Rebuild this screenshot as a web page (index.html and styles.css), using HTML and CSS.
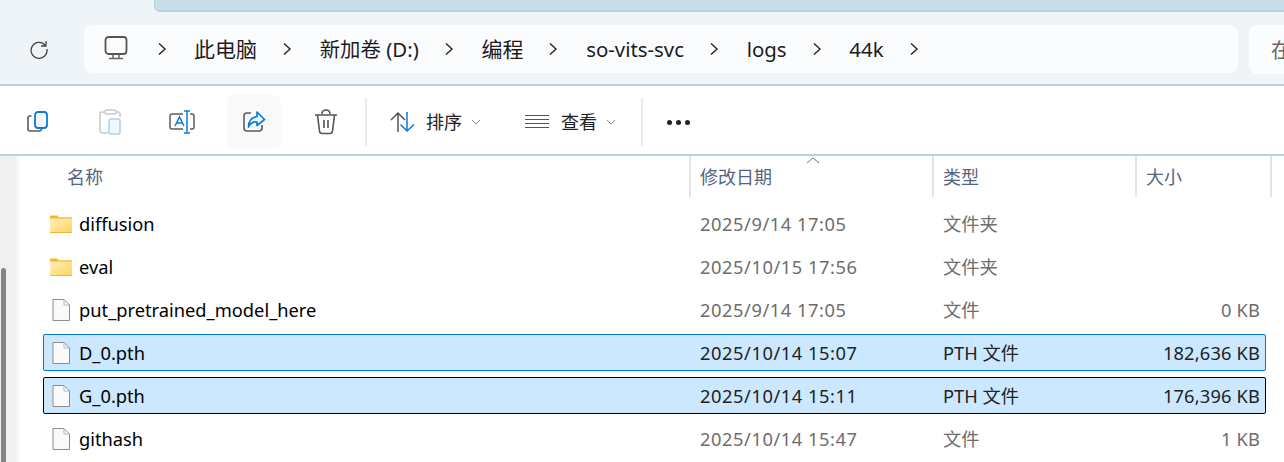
FILE: index.html
```html
<!DOCTYPE html>
<html lang="zh">
<head>
<meta charset="utf-8">
<title>44k</title>
<link rel="stylesheet" href="styles.css">
</head>
<body>
<svg width="0" height="0" class="defs">
  <defs>
    <symbol id="chev" viewBox="0 0 10 14"><path d="M2 1.500 8 7 2 12.500" fill="none" stroke="#2b2b2b" stroke-width="1.500"/></symbol>
    <symbol id="caret" viewBox="0 0 10 6"><path d="M1 1 5 5 9 1" fill="none" stroke="#8a8a8a" stroke-width="1"/></symbol>
    <symbol id="folder" viewBox="0 0 22 18">
      <path d="M0 1.500Q0 .5 1 .5H7L9 2.500H22V5H0Z" fill="#f9b81f"/>
      <rect x="0" y="2.500" width="22" height="15.500" fill="#f3b23a"/>
      <rect x="0" y="3.500" width="22" height="13.500" fill="url(#fg)"/>
      <linearGradient id="fg" x1="0" y1="0" x2="1" y2="1"><stop offset="0" stop-color="#fff0bd"/><stop offset="1" stop-color="#fdd55f"/></linearGradient>
    </symbol>
    <symbol id="file" viewBox="0 0 18 22">
      <path d="M1 .5H12L17.500 6V21.500H1Z" fill="#fafafa" stroke="#8d8d8d" stroke-width="1"/>
      <path d="M12 .5V6H17.500" fill="none" stroke="#b5b5b5" stroke-width="1"/>
    </symbol>
  </defs>
</svg>
<div class="window">
  <div class="nav">
    <div class="tab"></div>
    <div class="navrow">
      <div class="refresh">
        <svg width="20" height="20" viewBox="0 0 20 20"><path d="M16.500 6.500A8 8 0 1 0 18 10" fill="none" stroke="#444" stroke-width="1.300"/><path d="M17 2V7H12" fill="none" stroke="#444" stroke-width="1.300"/></svg>
      </div>
      <div class="crumbs">
        <svg class="pc" width="24" height="24" viewBox="0 0 24 24"><rect x="1.500" y="1" width="21" height="17" rx="3" fill="none" stroke="#555" stroke-width="1.800"/><path d="M9 18.500V22M15 18.500V22M5 22.500H19" fill="none" stroke="#666" stroke-width="1.500"/></svg>
        <svg class="sep first" width="10" height="14"><use href="#chev"/></svg>
        <span class="cjk">此电脑</span><svg class="sep" width="10" height="14"><use href="#chev"/></svg>
        <span>新加卷 (D:)</span><svg class="sep" width="10" height="14"><use href="#chev"/></svg>
        <span class="cjk">编程</span><svg class="sep" width="10" height="14"><use href="#chev"/></svg>
        <span>so-vits-svc</span><svg class="sep" width="10" height="14"><use href="#chev"/></svg>
        <span>logs</span><svg class="sep" width="10" height="14"><use href="#chev"/></svg>
        <span>44k</span><svg class="sep" width="10" height="14"><use href="#chev"/></svg>
      </div>
      <div class="search">在</div>
    </div>
  </div>
  <div class="toolbar">
    <button class="tool">
      <svg width="24" height="24" viewBox="0 0 24 24"><path d="M5.500 6H4Q2 6 2 8V19Q2 21 4 21H13Q15.500 21 15.500 19V18" fill="none" stroke="#5c5c5c" stroke-width="1.600"/><rect x="9" y="2" width="12" height="16" rx="3" fill="#f4f8fc" stroke="#0a7cd6" stroke-width="1.800"/></svg>
    </button>
    <button class="tool">
      <svg width="24" height="26" viewBox="0 0 24 26"><path d="M7 3H4Q2 3 2 5V22Q2 24 4 24H10M18 3H20Q22 3 22 5V8" fill="none" stroke="#c8c8c8" stroke-width="1.500"/><rect x="7" y="1" width="11" height="4" rx="1.500" fill="none" stroke="#c8c8c8" stroke-width="1.500"/><rect x="11" y="10" width="11" height="15" rx="2" fill="#f2f8fd" stroke="#a9d2f2" stroke-width="1.500"/></svg>
    </button>
    <button class="tool">
      <svg width="26" height="24" viewBox="0 0 26 24"><path d="M14 4H3Q1 4 1 6V17Q1 19 3 19H14M21 4H23Q25 4 25 6V17Q25 19 23 19H21" fill="none" stroke="#5c5c5c" stroke-width="1.500"/><path d="M6 16 10.500 7 15 16M7.500 13H13.500" fill="none" stroke="#0a7cd6" stroke-width="1.500"/><path d="M15 1H21M18 1V23M15 23H21" fill="none" stroke="#0a7cd6" stroke-width="1.500"/></svg>
    </button>
    <button class="tool hover">
      <svg width="24" height="24" viewBox="0 0 24 24"><path d="M9 3H5Q2 3 2 6V18Q2 21 5 21H17Q20 21 20 18V15" fill="none" stroke="#5c5c5c" stroke-width="1.600"/><path d="M15 2 22.500 9.500 15 15.500V12Q9 11.500 6.500 17 6.500 8 15 6.500Z" fill="#f2f8fd" stroke="#0a7cd6" stroke-width="1.700" stroke-linejoin="round"/></svg>
    </button>
    <button class="tool">
      <svg width="24" height="26" viewBox="0 0 24 26"><path d="M1 6H23M8 5Q8 1 12 1T16 5" fill="none" stroke="#555" stroke-width="1.600"/><path d="M3.500 6 5.500 22Q5.800 24.500 8 24.500H16Q18.200 24.500 18.500 22L20.500 6M10 11V19M14 11V19" fill="none" stroke="#555" stroke-width="1.600"/></svg>
    </button>
    <div class="vline"></div>
    <div class="labelled sort">
      <svg width="26" height="22" viewBox="0 0 26 22"><path d="M8 21V2M1 9 8 2 15 9" fill="none" stroke="#555" stroke-width="1.500"/><path d="M17 1V20M10.500 13.500 17 20 24 13.500" fill="none" stroke="#0a7cd6" stroke-width="1.500"/></svg>
      <span>排序</span>
      <svg class="caret" width="10" height="6"><use href="#caret"/></svg>
    </div>
    <div class="labelled view">
      <svg width="24" height="16" viewBox="0 0 24 16"><path d="M0 1.500H24M0 5.500H24M0 9.500H24M0 13.500H24" stroke="#555" stroke-width="1"/></svg>
      <span>查看</span>
      <svg class="caret" width="10" height="6"><use href="#caret"/></svg>
    </div>
    <div class="vline second"></div>
    <div class="dots"><i></i><i></i><i></i></div>
  </div>
  <div class="content">
    <div class="gutter"><div class="thumb"></div></div>
    <div class="list">
      <div class="head">
        <div class="hcell name">名称</div>
        <div class="hcell date">修改日期<svg class="sortmark" width="14" height="7" viewBox="0 0 14 7"><path d="M1 6 7 1 13 6" fill="none" stroke="#777" stroke-width="1"/></svg></div>
        <div class="hcell type">类型</div>
        <div class="hcell size">大小</div>
      </div>
      <div class="row"><div class="cname"><svg width="22" height="18"><use href="#folder"/></svg><span class="fn">diffusion</span></div><div class="cdate">2025/9/14 17:05</div><div class="ctype">文件夹</div><div class="num"></div></div>
      <div class="row"><div class="cname"><svg width="22" height="18"><use href="#folder"/></svg><span class="fn">eval</span></div><div class="cdate">2025/10/15 17:56</div><div class="ctype">文件夹</div><div class="num"></div></div>
      <div class="row"><div class="cname"><svg class="fi" width="18" height="22"><use href="#file"/></svg><span class="fn">put_pretrained_model_here</span></div><div class="cdate">2025/9/14 17:05</div><div class="ctype">文件</div><div class="num">0 KB</div></div>
      <div class="row sel"><div class="cname"><svg class="fi" width="18" height="22"><use href="#file"/></svg><span class="fn">D_0.pth</span></div><div class="cdate">2025/10/14 15:07</div><div class="ctype">PTH 文件</div><div class="num">182,636 KB</div></div>
      <div class="row sel focus"><div class="cname"><svg class="fi" width="18" height="22"><use href="#file"/></svg><span class="fn">G_0.pth</span></div><div class="cdate">2025/10/14 15:11</div><div class="ctype">PTH 文件</div><div class="num">176,396 KB</div></div>
      <div class="row"><div class="cname"><svg class="fi" width="18" height="22"><use href="#file"/></svg><span class="fn">githash</span></div><div class="cdate">2025/10/14 15:47</div><div class="ctype">文件</div><div class="num">1 KB</div></div>
    </div>
  </div>
</div>
</body>
</html>
```

FILE: styles.css
```css
* { box-sizing: border-box; }
html, body { margin: 0; padding: 0; height: 100%; overflow: hidden; background: #fff; }
body { font-family: "Noto Sans", "Noto Sans CJK SC", sans-serif; font-size: 18px; color: #1b1b1b; }
.defs { display: block; height: 0; }
.window { width: 1284px; height: 462px; display: flex; flex-direction: column; overflow: hidden; }

.nav { height: 86px; background: #eff4f8; border-bottom: 2px solid #bccfdc; flex: none; }
.tab { height: 12px; margin-left: 154px; background: #c8deeb; border-bottom: 2px solid #bccfdc; border-left: 1px solid #bccfdc; border-bottom-left-radius: 6px; }
.navrow { display: flex; align-items: center; height: 48px; margin-top: 13px; }
.refresh { width: 84px; flex: none; display: flex; justify-content: center; padding-right: 6px; }
.refresh svg { display: block; }
.crumbs { width: 1154px; height: 48px; flex: none; background: #fbfcfe; border-radius: 8px; display: flex; align-items: center; padding: 0 0 0 20px; white-space: nowrap; font-size: 20.4px; line-height: 24px; }
.cjk { font-size: 21px; }
.pc { margin-top: -3px; flex: none; }
.sep { flex: none; margin: 0 27.7px 0 25px; }
.sep.first { margin: 0 27px 0 29px; }
.search { margin-left: 11px; flex: 1; height: 49px; background: #fbfcfe; border-radius: 8px 0 0 8px; padding-left: 22px; line-height: 49px; font-size: 20px; color: #666; font-family: "Noto Sans CJK SC", sans-serif; overflow: hidden; }

.toolbar { height: 70px; flex: none; display: flex; align-items: center; padding: 4px 0 0 11px; border-bottom: 2px solid #bccfdc; background: #fff; }
.tool { width: 54px; height: 54px; margin-right: 18px; padding: 0; border: 0; background: transparent; border-radius: 7px; display: flex; align-items: center; justify-content: center; }
.tool svg { display: block; }
.tool.hover { background: #f9f9f9; }
.vline { width: 2px; height: 48px; background: #ececec; margin-left: -6px; flex: none; }
.labelled { display: flex; align-items: center; font-family: "Noto Sans CJK SC", sans-serif; font-size: 18px; color: #222; }
.labelled span { line-height: 24px; margin-top: -2px; }
.sort { margin-left: 23px; }
.sort span { margin-left: 10px; }
.view { margin-left: 44px; }
.view span { margin-left: 12px; }
.caret { margin-left: 9px; }
.vline.second { margin-left: 25px; }
.dots { display: flex; gap: 4px; margin-left: 24px; }
.dots i { width: 5px; height: 5px; border-radius: 50%; background: #222; display: block; }

.content { flex: 1; display: flex; min-height: 0; }
.gutter { width: 19px; flex: none; background: #f0f0f0; border-right: 3px solid #f7f7f7; position: relative; }
.thumb { position: absolute; left: 1px; top: 112px; width: 5px; height: 200px; background: #858585; border-radius: 3px 3px 0 0; }
.list { flex: 1; min-width: 0; }

.head { display: grid; grid-template-columns: 672px 243px 203px 135px; height: 41px; }
.hcell { position: relative; border-right: 2px solid #e4e4e4; padding-left: 9px; line-height: 40px; font-family: "Noto Sans CJK SC", sans-serif; font-size: 18px; color: #536580; }
.hcell.name { padding-left: 48px; }
.sortmark { position: absolute; left: 115px; top: 1px; }

.row { display: grid; grid-template-columns: 656px 243px 203px 119px; align-items: center; height: 37px; margin: 8px 18px 6px 24px; border: 1px solid transparent; border-radius: 2px; font-size: 18.3px; color: #6d6d6d; white-space: nowrap; }
.row + .row { margin-top: 0; }
.cdate { letter-spacing: .55px; }
.ctype { padding-bottom: 2px; }
.cname { display: flex; align-items: center; padding-left: 6px; color: #000; }
.cname svg { flex: none; display: block; }
.cname .fi { margin-left: 2px; margin-right: 2px; }
.fn { margin-left: 7px; font-size: 18.3px; }
.num { text-align: right; padding-right: 5px; letter-spacing: .15px; }
.sel { background: #cce8ff; border-color: #0078d4; color: #222; }
.focus { border-color: #000; }
```
